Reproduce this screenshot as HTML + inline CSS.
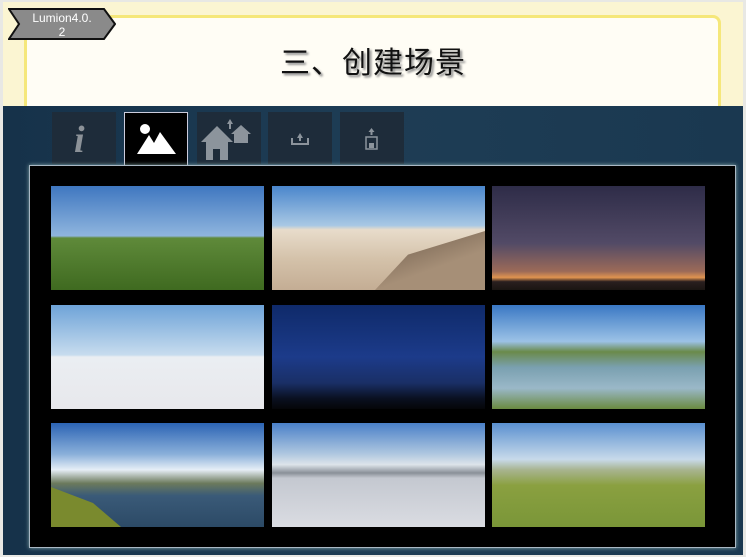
<!DOCTYPE html>
<html><head><meta charset="utf-8"><style>
*{margin:0;padding:0;box-sizing:border-box}
body{width:746px;height:557px;background:#e8e8e4;position:relative;overflow:hidden;font-family:"Liberation Sans","Noto Sans CJK SC",sans-serif}
.slide{position:absolute;left:3px;top:2px;width:740px;height:553px;background:#fbf5d2}
.card{position:absolute;left:24px;top:15px;width:697px;height:100px;background:#fffdf5;border:3px solid #f5e77a;border-radius:8px}
.title{position:absolute;left:0;width:746px;top:38px;text-align:center;font-size:30px;color:#111;text-shadow:2px 2px 2px #888;letter-spacing:1px;font-family:"Noto Sans CJK SC",sans-serif}
.dark{position:absolute;left:3px;top:106px;width:740px;height:449px;background:linear-gradient(90deg,#16324a,#1e3d55 50%,#1a3850);}
.box{position:absolute;left:29px;top:165px;width:707px;height:383px;background:#000;border:1px solid #aab8c4;box-shadow:0 0 4px #8aa}
.tab{position:absolute;top:112px;width:64px;height:52px;background:#1e2c3a}
.tab.a{background:#000;border:1px solid #ccd;border-bottom:none;height:54px}
.t{position:absolute;width:213px;height:104px}
.banner{position:absolute;left:8px;top:8px;width:108px;height:32px}
</style></head><body>
<div class="slide"></div>
<div class="card"></div>
<div class="title">三、创建场景</div>
<div class="dark"></div>
<div class="tab" style="left:52px"><div style="position:absolute;left:22px;top:6px;font:italic bold 38px 'Liberation Serif',serif;color:#8c9298">i</div></div>
<div class="tab a" style="left:124px"><svg width="64" height="52" viewBox="0 0 64 52"><circle cx="20" cy="16" r="5" fill="#fff"/><path d="M12 41 L24 22 L29 30 L35 19 L51 41Z" fill="#fff"/></svg></div>
<div class="tab" style="left:197px"><svg width="64" height="52" viewBox="0 0 64 52"><path d="M4 30 L20 14 L36 30 L31 30 L31 48 L9 48 L9 30Z" fill="#8c949c"/><rect x="16" y="37" width="7" height="11" fill="#1e2c3a"/><path d="M34 22 L44 13 L54 22 L51 22 L51 31 L37 31 L37 22Z" fill="#8c949c"/><path d="M30 12 L33 7 L36 12Z M32 12h2v5h-2z" fill="#8c949c"/></svg></div>
<div class="tab" style="left:268px"><svg width="64" height="52" viewBox="0 0 64 52"><path d="M24 26 v6 h16 v-6" stroke="#8c949c" stroke-width="2" fill="none"/><path d="M29 26 L32 21 L35 26Z M31 26h2v3h-2z" fill="#8c949c"/></svg></div>
<div class="tab" style="left:340px"><svg width="64" height="52" viewBox="0 0 64 52"><rect x="26" y="25" width="11" height="12" fill="none" stroke="#8c949c" stroke-width="1.5"/><rect x="29" y="31" width="5" height="5" fill="#8c949c"/><path d="M28.5 20 L31.5 16 L34.5 20Z M30.5 20h2v3h-2z" fill="#8c949c"/></svg></div>
<div class="box"></div>
<div class="t" style="left:51px;top:186px;background:linear-gradient(#3f77c0 0%,#8fb5de 48%,#5f8a3a 50%,#3f6a20 100%)"></div>
<div class="t" style="left:272px;top:186px;background:linear-gradient(#4a86cc 0%,#a9c8e4 38%,#e8dccb 42%,#d4c2aa 70%,#c4ad94 100%)"><div style="position:absolute;right:0;top:45px;width:110px;height:59px;background:linear-gradient(160deg,#6a5848,#a68f77 60%);clip-path:polygon(100% 0,100% 100%,0 100%,30% 40%)"></div></div>
<div class="t" style="left:492px;top:186px;background:linear-gradient(#2e2c48 0%,#524a66 55%,#9c6a58 82%,#e09450 88%,#2a1f1f 92%,#1a1512 100%)"></div>
<div class="t" style="left:51px;top:305px;background:linear-gradient(#6ea3d8 0%,#c7dcee 48%,#eaeef2 50%,#e8e8ec 100%)"></div>
<div class="t" style="left:272px;top:305px;background:linear-gradient(#0f2a6a 0%,#1c3b8a 50%,#1a2f66 75%,#0a1020 90%,#050608 100%)"></div>
<div class="t" style="left:492px;top:305px;background:linear-gradient(#3a78c4 0%,#9cc2e6 35%,#6a8a4a 45%,#7aa0b0 60%,#9ab8c8 80%,#6a8a40 100%)"></div>
<div class="t" style="left:51px;top:423px;background:linear-gradient(#2c64b4 0%,#8ab0da 30%,#e6eef6 45%,#6c7a5c 58%,#3a5a78 70%,#2c4a66 100%)"><div style="position:absolute;left:0;bottom:0;width:70px;height:40px;background:#7a8a2e;clip-path:polygon(0 0,60% 40%,100% 100%,0 100%)"></div></div>
<div class="t" style="left:272px;top:423px;background:linear-gradient(#4a80c8 0%,#b0c8e0 30%,#dde4ea 40%,#8a9098 48%,#c4c8d0 53%,#dadce2 100%)"></div>
<div class="t" style="left:492px;top:423px;background:linear-gradient(#5a90d0 0%,#c8daea 35%,#a8b490 45%,#8aa040 60%,#7a9638 100%)"></div>
<svg class="banner" viewBox="0 0 108 32"><path d="M1 1 L96 1 L107 16 L96 31 L1 31 L11 16Z" fill="#8a8a8a" stroke="#111" stroke-width="2"/><text x="54" y="14" text-anchor="middle" font-family="Liberation Sans,sans-serif" font-size="12" fill="#fff">Lumion4.0.</text><text x="54" y="28" text-anchor="middle" font-family="Liberation Sans,sans-serif" font-size="12" fill="#fff">2</text></svg>
</body></html>
